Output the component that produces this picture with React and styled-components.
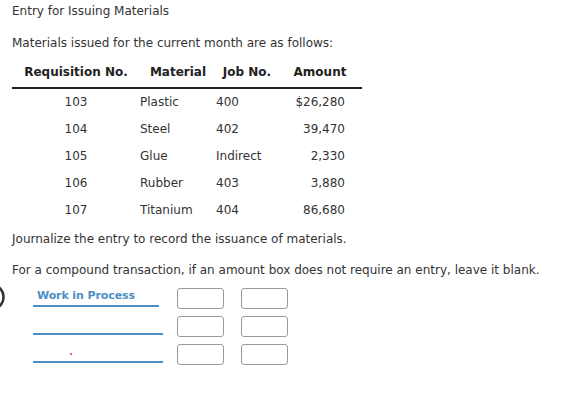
import React from "react";
import styled, { createGlobalStyle } from "styled-components";

const Global = createGlobalStyle`
  html, body { margin: 0; padding: 0; background: #fff; }
  body { font-family: "DejaVu Sans", Verdana, sans-serif; font-size: 12px; color: #333; overflow: hidden; }
`;

const Page = styled.div`
  position: relative;
  width: 581px;
  height: 396px;
  padding: 4px 0 0 12px;
  box-sizing: border-box;
`;

const Para = styled.p`
  margin: 0;
  height: 14px;
  line-height: 14px;
  margin-top: ${(p) => p.$mt || 0}px;
`;

const Table = styled.div`
  display: grid;
  grid-template-columns: 128px 76px 62px 84px;
  width: 350px;
  margin-top: ${(p) => p.$mt}px;
`;

const HeadCell = styled.div`
  font-weight: bold;
  color: #222;
  text-align: center;
  line-height: 14px;
  padding-bottom: 8px;
  border-bottom: 2px solid #222;
`;

const Cell = styled.div`
  height: 27px;
  line-height: 27px;
  text-align: ${(p) => p.$align || "left"};
  padding-right: ${(p) => p.$pr || 0}px;
`;

const Journal = styled.div`
  display: grid;
  grid-template-columns: 144px 64px 64px;
  align-items: start;
  row-gap: 7px;
  margin-top: 11px;
  margin-left: 21px;
  position: relative;
`;

const AccountLine = styled.div`
  position: relative;
  width: ${(p) => p.$w}px;
  height: 19px;
  box-sizing: border-box;
  border-bottom: 2px solid #4d8ec6;
  padding: 1px 0 0 4px;
  color: #4d8ec6;
  font-weight: bold;
  font-size: 11px;
  letter-spacing: -0.1px;
  line-height: 14px;
`;

const AmountBox = styled.div`
  width: 47px;
  height: 21px;
  box-sizing: border-box;
  border: 1.5px solid #9a9a9a;
  border-radius: 3px;
  background: #fff;
`;

const Marker = styled.svg`
  position: absolute;
  left: -53px;
  top: -4px;
`;

const Dot = styled.span`
  position: absolute;
  left: 37px;
  top: 9px;
  width: 2px;
  height: 2px;
  background: #e0303a;
  border-radius: 1px;
`;

const rows = [
  ["103", "Plastic", "400", "$26,280"],
  ["104", "Steel", "402", "39,470"],
  ["105", "Glue", "Indirect", "2,330"],
  ["106", "Rubber", "403", "3,880"],
  ["107", "Titanium", "404", "86,680"],
];

export default function App() {
  return (
    <Page>
      <Global />
      <Para>Entry for Issuing Materials</Para>
      <Para $mt={18}>Materials issued for the current month are as follows:</Para>
      <Table $mt={15}>
        <HeadCell>Requisition No.</HeadCell>
        <HeadCell>Material</HeadCell>
        <HeadCell>Job No.</HeadCell>
        <HeadCell>Amount</HeadCell>
        {rows.map((r) => (
          <React.Fragment key={r[0]}>
            <Cell $align="center">{r[0]}</Cell>
            <Cell>{r[1]}</Cell>
            <Cell>{r[2]}</Cell>
            <Cell $align="right" $pr={17}>{r[3]}</Cell>
          </React.Fragment>
        ))}
      </Table>
      <Para $mt={8}>Journalize the entry to record the issuance of materials.</Para>
      <Para $mt={17}>For a compound transaction, if an amount box does not require an entry, leave it blank.</Para>
      <Journal>
        <Marker width="40" height="34" viewBox="0 0 40 34">
          <circle cx="11" cy="13" r="12.5" fill="none" stroke="#333" strokeWidth="2.5" />
        </Marker>
        <AccountLine $w={126}>Work in Process</AccountLine>
        <AmountBox />
        <AmountBox />
        <AccountLine $w={130} />
        <AmountBox />
        <AmountBox />
        <AccountLine $w={130}>
          <Dot />
        </AccountLine>
        <AmountBox />
        <AmountBox />
      </Journal>
    </Page>
  );
}
